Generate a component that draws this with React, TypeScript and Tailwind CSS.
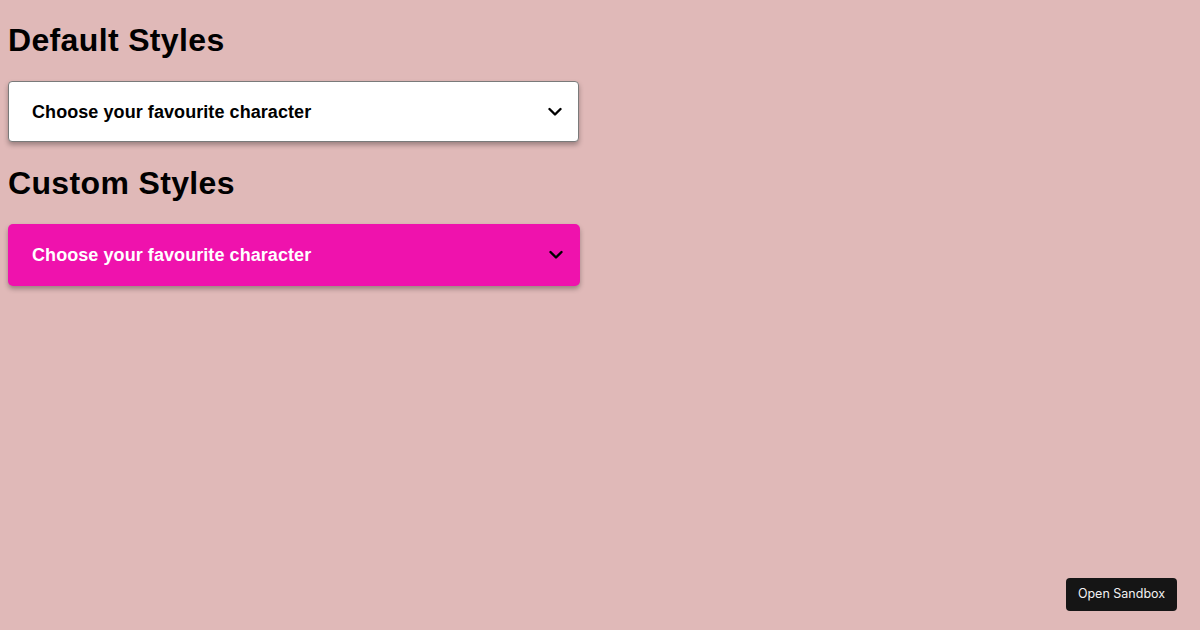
import React from 'react';

function Chevron() {
  return (
    <svg width="14" height="10" viewBox="0 0 14 10" fill="none" className="shrink-0">
      <path d="M1.5 2 L7 7.5 L12.5 2" stroke="#000" strokeWidth="2.4" strokeLinecap="round" strokeLinejoin="round" />
    </svg>
  );
}

function SelectBox({ custom }: { custom?: boolean }) {
  return (
    <div
      className={
        custom
          ? 'w-[572px] h-[62px] flex items-center justify-between pl-6 pr-[17px] rounded-[5px] bg-[#ef12ad] text-white shadow-[0_3px_5px_rgba(0,0,0,0.3)]'
          : 'w-[571px] h-[61px] flex items-center justify-between pl-[23px] pr-[16px] rounded-[4px] bg-white text-black border border-[#7a7a7a] shadow-[0_3px_5px_rgba(0,0,0,0.3)]'
      }
    >
      <span className="text-[18px] font-bold leading-[22px] tracking-[0.07px]">Choose your favourite character</span>
      <Chevron />
    </div>
  );
}

export default function App() {
  return (
    <div className="min-h-[630px] bg-[#e0b9b8] px-2 pt-[22px] font-['Liberation_Sans',Arial,sans-serif] text-black relative">
      <h1 className="text-[32px] font-bold leading-[37px] tracking-[0.35px] mb-[22px]">Default Styles</h1>
      <SelectBox />
      <h1 className="text-[32px] font-bold leading-[37px] tracking-[0.35px] mt-[23px] mb-[22px]">Custom Styles</h1>
      <SelectBox custom />

      <button className="fixed right-[23px] bottom-[19px] w-[111px] h-[33px] rounded-[4px] bg-[#151515] text-[#f2f2f2] text-[12.5px] font-['Inter','Liberation_Sans',sans-serif]">
        Open Sandbox
      </button>
    </div>
  );
}
